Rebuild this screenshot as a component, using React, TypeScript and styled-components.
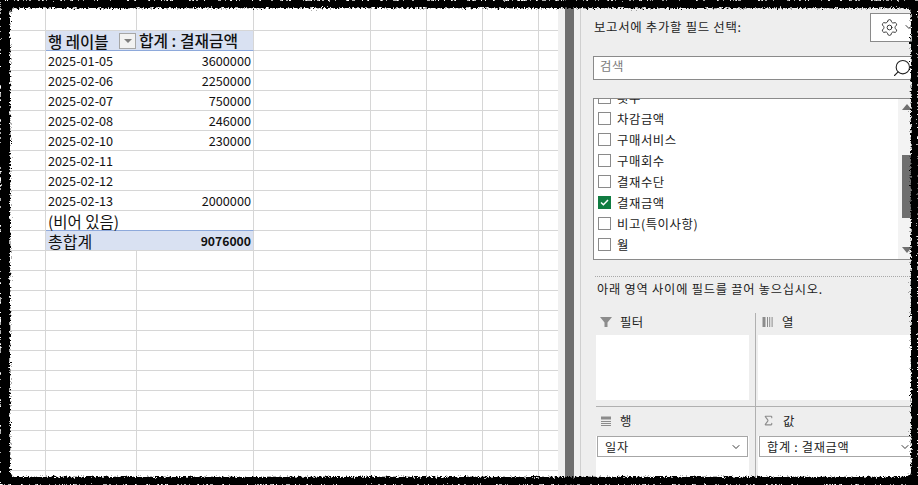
import React from 'react';
import styled, { createGlobalStyle } from 'styled-components';
import { ChevronDown, Search, Settings, Sigma } from 'lucide-react';

const KR = `'Noto Sans CJK KR', 'Liberation Sans', sans-serif`;
const GRID = '#d6d6d6';

const GlobalStyle = createGlobalStyle`
  html, body { margin: 0; padding: 0; background: #000; }
  * { box-sizing: border-box; }
`;

const Page = styled.div`
  position: relative;
  width: 918px;
  height: 485px;
  display: flex;
  overflow: hidden;
  background: #fff;
  font-family: ${KR};
  color: #1a1a1a;
`;

const Sheet = styled.div`
  width: 558px;
  flex: none;
  display: grid;
  grid-template-columns: 46px 91px 117px 117px 56px 56px 56px 1fr;
  grid-template-rows: 31px;
  grid-auto-rows: 20px;
  background: #fff;
`;

const Cell = styled.div<{ $open?: boolean; $band?: boolean; $blue?: boolean; $right?: boolean; $size?: number; $bold?: number }>`
  display: flex;
  align-items: center;
  justify-content: ${(p) => (p.$right ? 'flex-end' : 'flex-start')};
  min-width: 0;
  padding: 0 2px;
  white-space: nowrap;
  line-height: 18px;
  border-right: ${(p) => (p.$open ? '0' : `1px solid ${GRID}`)};
  border-bottom: 1px solid ${(p) => (p.$blue ? '#8ea9db' : GRID)};
  background: ${(p) => (p.$band ? '#d9e1f2' : 'transparent')};
  font-size: ${(p) => p.$size ?? 12.7}px;
  font-weight: ${(p) => p.$bold ?? 400};
  color: #111;
`;

const FilterButton = styled.span`
  flex: none;
  width: 17px;
  height: 16px;
  margin-left: auto;
  margin-right: -1px;
  display: flex;
  align-items: center;
  justify-content: center;
  background: #f2f2f2;
  border: 1px solid #a6a6a6;
  &::after {
    content: '';
    border-left: 4px solid transparent;
    border-right: 4px solid transparent;
    border-top: 4px solid #7f7f7f;
  }
`;

const Splitter = styled.div`
  width: 23px;
  flex: none;
  display: flex;
  justify-content: flex-start;
  padding-left: 7px;
  background: #f0f0f0;
  border-right: 1px solid #cfcfcf;
  &::before {
    content: '';
    width: 9px;
    background: #6f6f6f;
  }
`;

const Panel = styled.div`
  flex: 1;
  min-width: 0;
  padding: 13px 0 0 12px;
  background: #eeeeee;
  overflow: hidden;
  display: flex;
  flex-direction: column;
`;

const PanelHead = styled.div`
  height: 28px;
  flex: none;
  display: flex;
  align-items: center;
  justify-content: space-between;
`;

const PanelTitle = styled.span`
  font-size: 12.4px;
  letter-spacing: 0.7px;
  color: #222;
  margin-left: 1px;
`;

const GearButton = styled.div`
  width: 48px;
  height: 29px;
  display: flex;
  align-items: center;
  gap: 4px;
  padding-left: 9px;
  background: #fff;
  border: 1px solid #8a8a8a;
  color: #222;
`;

const SearchBox = styled.div`
  height: 24px;
  flex: none;
  margin-top: 15px;
  display: flex;
  align-items: center;
  justify-content: space-between;
  padding: 0 4px 4px 6px;
  background: #fff;
  border: 1px solid #8a8a8a;
  font-size: 12.4px;
  letter-spacing: 0.6px;
  color: #7a7a7a;
`;

const FlippedSearch = styled(Search)`
  transform: scaleX(-1);
  color: #222;
  margin: 4px 1px 0 0;
`;

const FieldList = styled.div`
  height: 162px;
  flex: none;
  margin-top: 18px;
  display: flex;
  overflow: hidden;
  background: #fff;
  border: 1px solid #8a8a8a;
  border-right: 0;
`;

const FieldItems = styled.div`
  flex: 1;
  margin-top: -12px;
`;

const FieldRow = styled.div`
  height: 21px;
  display: flex;
  align-items: center;
  gap: 6px;
  padding-left: 4px;
  font-size: 12.4px;
  letter-spacing: 0.55px;
  color: #222;
`;

const Check = styled.span<{ $on?: boolean }>`
  flex: none;
  width: 13px;
  height: 13px;
  display: flex;
  align-items: center;
  justify-content: center;
  background: ${(p) => (p.$on ? '#107c41' : '#fff')};
  border: ${(p) => (p.$on ? '0' : '1px solid #8a8a8a')};
`;

const Scrollbar = styled.div`
  width: 20px;
  flex: none;
  padding: 5px 0 0 4px;
  background: #f3f3f3;
  display: flex;
  flex-direction: column;
`;

const Arrow = styled.span<{ $down?: boolean }>`
  width: 0;
  height: 0;
  margin-top: ${(p) => (p.$down ? '29px' : '0')};
  border-left: 5px solid transparent;
  border-right: 5px solid transparent;
  ${(p) => (p.$down ? 'border-top: 6px solid #6f6f6f;' : 'border-bottom: 6px solid #6f6f6f;')}
`;

const Thumb = styled.span`
  height: 63px;
  margin-top: 45px;
  background: #6f6f6f;
`;

const Dotted = styled.div`
  flex: none;
  margin: 16px 6px 0 2px;
  border-top: 1px dotted #a8a8a8;
`;

const Hint = styled.div`
  height: 36px;
  flex: none;
  padding: 3px 0 0 4px;
  font-size: 12.2px;
  letter-spacing: 0.8px;
  color: #222;
`;

const Zones = styled.div`
  flex: 1;
  margin-left: 3px;
  display: grid;
  grid-template-columns: 160px 1fr;
  grid-template-rows: 94px 1fr;
`;

const Zone = styled.div<{ $side?: boolean; $low?: boolean }>`
  display: flex;
  flex-direction: column;
  padding-left: ${(p) => (p.$side ? '2px' : '0')};
  padding-right: ${(p) => (p.$side ? '0' : '6px')};
  border-right: ${(p) => (p.$side ? '0' : '1px solid #b0b0b0')};
  border-bottom: ${(p) => (p.$low ? '0' : '1px solid #b0b0b0')};
`;

const ZoneLabel = styled.div<{ $low?: boolean }>`
  height: ${(p) => (p.$low ? 29 : 22)}px;
  flex: none;
  display: flex;
  align-items: center;
  gap: 8px;
  padding: 0 0 ${(p) => (p.$low ? 2 : 4)}px 4px;
  font-size: 12.4px;
  letter-spacing: 0.4px;
  color: #222;
  svg {
    flex: none;
    color: #8c8c8c;
  }
`;

const ZoneBox = styled.div<{ $low?: boolean }>`
  ${(p) => (p.$low ? 'flex: 1;' : 'height: 65px; flex: none;')}
  padding: 0 1px;
  background: #fff;
`;

const ZoneChip = styled.div`
  height: 21px;
  display: flex;
  align-items: center;
  justify-content: space-between;
  padding: 0 5px 0 7px;
  background: #fff;
  border: 1px solid #a6a6a6;
  font-size: 12.2px;
  letter-spacing: 0.7px;
  color: #222;
  svg {
    flex: none;
    color: #222;
  }
`;

const TornFrame = styled.svg`
  position: absolute;
  inset: 0;
  pointer-events: none;
`;

const pivotRows: [string, string][] = [
  ['2025-01-05', '3600000'],
  ['2025-02-06', '2250000'],
  ['2025-02-07', '750000'],
  ['2025-02-08', '246000'],
  ['2025-02-10', '230000'],
  ['2025-02-11', ''],
  ['2025-02-12', ''],
  ['2025-02-13', '2000000'],
];

const fields = ['횟수', '차감금액', '구매서비스', '구매회수', '결재수단', '결재금액', '비고(특이사항)', '월', '일'];

const Blanks = () => (
  <>
    <Cell />
    <Cell />
    <Cell />
    <Cell />
    <Cell $open />
  </>
);

const FunnelIcon = () => (
  <svg width="12" height="12" viewBox="0 0 12 12">
    <path d="M0 1h12L7.5 6.5V11h-3V6.5z" fill="currentColor" />
  </svg>
);

const ColumnsIcon = () => (
  <svg width="12" height="12" viewBox="0 0 12 12">
    <path d="M0.5 1h3v10h-3zM5 1h1v10H5zM7.2 1h1v10h-1zM9.6 1h1v10h-1z" fill="currentColor" />
  </svg>
);

const RowsIcon = () => (
  <svg width="12" height="12" viewBox="0 0 12 12">
    <path d="M1 1.5h10v3H1zM1 6h10v1H1zM1 8h10v1H1zM1 10h10v1H1z" fill="currentColor" />
  </svg>
);

const frameEdge = 'M0 0H918V485H0ZM10 13Q10 8 15 8H905Q911 8 911 13V472Q911 477 905 477H15Q10 477 10 472Z';

function App() {
  const fillerRows = Array.from({ length: 12 }, (_, i) => i);

  return (
    <Page>
      <GlobalStyle />
      <Sheet>
        <Cell />
        <Cell />
        <Cell />
        <Blanks />

        <Cell />
        <Cell $band $blue $open $size={15.5} $bold={500}>
          행 레이블
          <FilterButton />
        </Cell>
        <Cell $band $blue $size={15.8} $bold={500}>
          합계 : 결재금액
        </Cell>
        <Blanks />

        {pivotRows.map(([date, amount]) => (
          <React.Fragment key={date}>
            <Cell />
            <Cell $open>{date}</Cell>
            <Cell $right>{amount}</Cell>
            <Blanks />
          </React.Fragment>
        ))}

        <Cell />
        <Cell $open $blue $size={15.5}>
          (비어 있음)
        </Cell>
        <Cell $blue />
        <Blanks />

        <Cell />
        <Cell $band $open $size={16}>
          총합계
        </Cell>
        <Cell $band $right $size={12.2} $bold={700}>
          9076000
        </Cell>
        <Blanks />

        {fillerRows.map((i) => (
          <React.Fragment key={i}>
            <Cell />
            <Cell />
            <Cell />
            <Blanks />
          </React.Fragment>
        ))}
      </Sheet>

      <Splitter />

      <Panel>
        <PanelHead>
          <PanelTitle>보고서에 추가할 필드 선택:</PanelTitle>
          <GearButton>
            <Settings size={19} strokeWidth={1.1} />
            <ChevronDown size={12} strokeWidth={1.8} />
          </GearButton>
        </PanelHead>

        <SearchBox>
          검색
          <FlippedSearch size={20} strokeWidth={1.3} />
        </SearchBox>

        <FieldList>
          <FieldItems>
            {fields.map((name) => {
              const on = name === '결재금액';
              return (
                <FieldRow key={name}>
                  <Check $on={on}>
                    {on && (
                      <svg width="9" height="7" viewBox="0 0 9 7">
                        <path d="M1 3.5l2.4 2.2L8 1" fill="none" stroke="#fff" strokeWidth="1.5" />
                      </svg>
                    )}
                  </Check>
                  {name}
                </FieldRow>
              );
            })}
          </FieldItems>
          <Scrollbar>
            <Arrow />
            <Thumb />
            <Arrow $down />
          </Scrollbar>
        </FieldList>

        <Dotted />
        <Hint>아래 영역 사이에 필드를 끌어 놓으십시오.</Hint>

        <Zones>
          <Zone>
            <ZoneLabel>
              <FunnelIcon />
              필터
            </ZoneLabel>
            <ZoneBox />
          </Zone>
          <Zone $side>
            <ZoneLabel>
              <ColumnsIcon />열
            </ZoneLabel>
            <ZoneBox />
          </Zone>
          <Zone $low>
            <ZoneLabel $low>
              <RowsIcon />행
            </ZoneLabel>
            <ZoneBox $low>
              <ZoneChip>
                일자
                <ChevronDown size={12} strokeWidth={1.8} />
              </ZoneChip>
            </ZoneBox>
          </Zone>
          <Zone $low $side>
            <ZoneLabel $low>
              <Sigma size={13} strokeWidth={2} />값
            </ZoneLabel>
            <ZoneBox $low>
              <ZoneChip>
                합계 : 결재금액
                <ChevronDown size={12} strokeWidth={1.8} />
              </ZoneChip>
            </ZoneBox>
          </Zone>
        </Zones>
      </Panel>

      <TornFrame width="918" height="485" viewBox="0 0 918 485">
        <defs>
          <filter id="torn" x="0" y="0" width="100%" height="100%">
            <feTurbulence type="fractalNoise" baseFrequency="0.45" numOctaves="2" seed="4" />
            <feDisplacementMap in="SourceGraphic" scale="6" xChannelSelector="R" yChannelSelector="G" />
          </filter>
          <filter id="fuzz" x="0" y="0" width="100%" height="100%">
            <feTurbulence type="fractalNoise" baseFrequency="0.8" numOctaves="2" seed="9" />
            <feDisplacementMap in="SourceGraphic" scale="9" xChannelSelector="G" yChannelSelector="R" />
          </filter>
        </defs>
        <path d={frameEdge} fillRule="evenodd" fill="#000" opacity="0.3" filter="url(#fuzz)" />
        <path d={frameEdge} fillRule="evenodd" fill="#000" filter="url(#torn)" />
      </TornFrame>
    </Page>
  );
}

export default App;
